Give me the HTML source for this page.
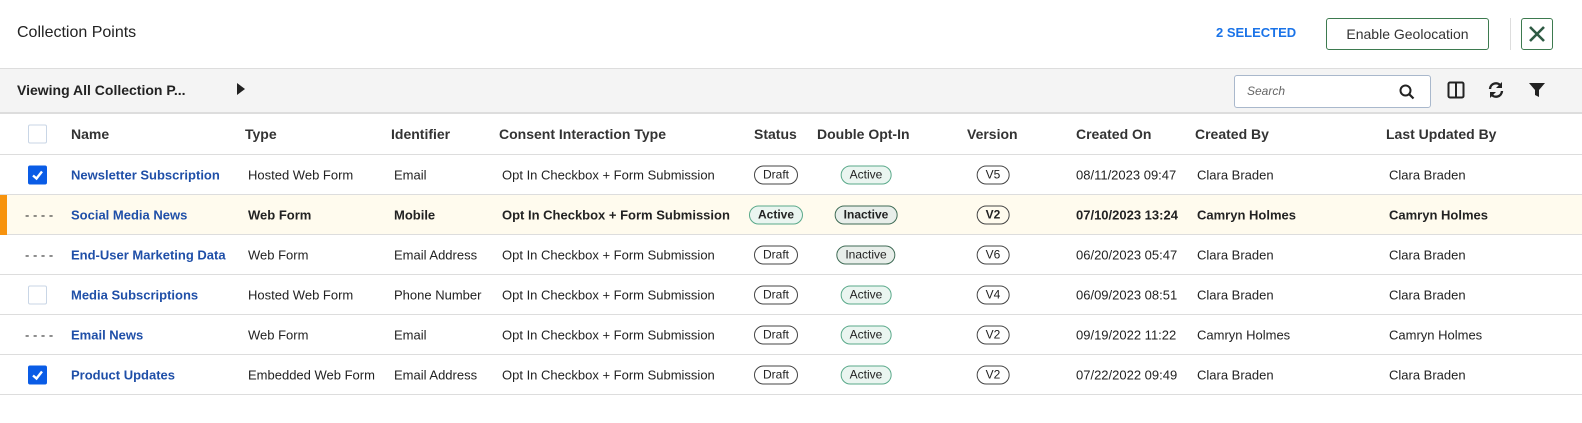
<!DOCTYPE html>
<html><head><style>
*{margin:0;padding:0;box-sizing:border-box}
body{width:1582px;height:423px;background:#fff;font-family:"Liberation Sans",sans-serif;color:#222;position:relative;overflow:hidden;font-size:13px}
.a{position:absolute;white-space:nowrap}
.row{position:absolute;left:0;width:1582px;height:40px;border-bottom:1px solid #ddd}
.row .a{top:50%;transform:translateY(-50%)}
.nm{color:#1f4fa8;font-weight:bold}
.pill{border:1px solid #444;border-radius:10px;height:19px;line-height:17px;padding:0 8px;font-size:12px;transform:translate(-50%,-50%)!important}
.act{background:#eaf5f0;border-color:#5aa98a}
.ina{background:#e8eeea;border-color:#3f6b55}
.cb{width:19px;height:19px;border:1px solid #c9d6e6;border-radius:2px;background:#fff}
.cbx{background:#0a5ce6;border-color:#0a5ce6}
.b{font-weight:bold}
.hd{font-weight:bold;color:#333;font-size:14px}
</style></head><body>
<div class="a" style="left:17px;top:24px;font-size:16px;color:#222">Collection Points</div>
<div class="a" style="left:1216px;top:25px;font-size:13px;font-weight:bold;color:#1a73e8">2 SELECTED</div>
<div class="a" style="left:1326px;top:18px;width:163px;height:32px;border:1px solid #3d7a4f;border-radius:3px;text-align:center;line-height:30px;font-size:14px;color:#333">Enable Geolocation</div>
<div class="a" style="left:1510px;top:18px;width:1px;height:32px;background:#ddd"></div>
<div class="a" style="left:1521px;top:18px;width:32px;height:32px;border:1px solid #3d7a4f;border-radius:3px"><svg width="30" height="30" viewBox="0 0 30 30"><path d="M8 8L22 22M22 8L8 22" stroke="#2f5b44" stroke-width="2.6"/></svg></div>
<div class="a" style="left:0;top:68px;width:1582px;height:46px;background:#f4f4f4;border-top:1px solid #ddd;border-bottom:2px solid #ddd"></div>
<div class="a" style="left:17px;top:82px;font-weight:bold;font-size:14px;color:#222">Viewing All Collection P...</div>
<svg class="a" style="left:236px;top:82px" width="10" height="14"><path d="M1 1L9 7L1 13Z" fill="#222"/></svg>
<div class="a" style="left:1234px;top:75px;width:197px;height:33px;border:1px solid #a9b8cc;border-radius:3px;background:#fff"><span style="position:absolute;left:12px;top:8px;font-style:italic;font-size:12px;color:#666">Search</span><svg style="position:absolute;left:164px;top:8px" width="16" height="16"><circle cx="6.5" cy="6.5" r="5" fill="none" stroke="#222" stroke-width="2"/><path d="M10 10L14.5 14.5" stroke="#222" stroke-width="2.2"/></svg></div>
<svg class="a" style="left:1447px;top:81px" width="18" height="18"><rect x="1.5" y="1.5" width="15" height="15" rx="1.5" fill="none" stroke="#222" stroke-width="2"/><path d="M9 2V16" stroke="#222" stroke-width="2"/></svg>
<svg class="a" style="left:1487px;top:81px" width="18" height="18" viewBox="0 0 18 18"><path d="M3 8A6 6 0 0 1 14 5" fill="none" stroke="#222" stroke-width="2.4"/><path d="M15 1V7H9Z" fill="#222"/><path d="M15 10A6 6 0 0 1 4 13" fill="none" stroke="#222" stroke-width="2.4"/><path d="M3 17V11H9Z" fill="#222"/></svg>
<svg class="a" style="left:1529px;top:82px" width="16" height="16"><path d="M0 1H16L10 8V15L6 13V8Z" fill="#222"/></svg>

<div class="row" style="top:114px;height:41px">
<div class="a cb" style="left:28px"></div>
<div class="a hd" style="left:71px">Name</div><div class="a hd" style="left:245px">Type</div><div class="a hd" style="left:391px">Identifier</div><div class="a hd" style="left:499px">Consent Interaction Type</div><div class="a hd" style="left:754px">Status</div><div class="a hd" style="left:817px">Double Opt-In</div><div class="a hd" style="left:967px">Version</div><div class="a hd" style="left:1076px">Created On</div><div class="a hd" style="left:1195px">Created By</div><div class="a hd" style="left:1386px">Last Updated By</div>
</div>

<div class="row" style="top:155px">
<div class="a cb cbx" style="left:28px"><svg width="17" height="17"><path d="M4 9L7.5 12L13 5" fill="none" stroke="#fff" stroke-width="2.4"/></svg></div>
<div class="a nm" style="left:71px">Newsletter Subscription</div><div class="a" style="left:248px">Hosted Web Form</div><div class="a" style="left:394px">Email</div><div class="a" style="left:502px">Opt In Checkbox + Form Submission</div>
<div class="a pill" style="left:776px">Draft</div><div class="a pill act" style="left:866px">Active</div><div class="a pill" style="left:993px">V5</div>
<div class="a" style="left:1076px">08/11/2023 09:47</div><div class="a" style="left:1197px">Clara Braden</div><div class="a" style="left:1389px">Clara Braden</div></div>

<div class="row" style="top:195px;background:#fffbee"><div class="a" style="left:0;width:7px;height:40px;background:#f7930e"></div>
<div class="a" style="left:25px">- - - -</div>
<div class="a nm" style="left:71px">Social Media News</div><div class="a b" style="left:248px">Web Form</div><div class="a b" style="left:394px">Mobile</div><div class="a b" style="left:502px">Opt In Checkbox + Form Submission</div>
<div class="a pill act b" style="left:776px">Active</div><div class="a pill ina b" style="left:866px">Inactive</div><div class="a pill b" style="left:993px">V2</div>
<div class="a b" style="left:1076px">07/10/2023 13:24</div><div class="a b" style="left:1197px">Camryn Holmes</div><div class="a b" style="left:1389px">Camryn Holmes</div></div>

<div class="row" style="top:235px">
<div class="a" style="left:25px">- - - -</div>
<div class="a nm" style="left:71px">End-User Marketing Data</div><div class="a" style="left:248px">Web Form</div><div class="a" style="left:394px">Email Address</div><div class="a" style="left:502px">Opt In Checkbox + Form Submission</div>
<div class="a pill" style="left:776px">Draft</div><div class="a pill ina" style="left:866px">Inactive</div><div class="a pill" style="left:993px">V6</div>
<div class="a" style="left:1076px">06/20/2023 05:47</div><div class="a" style="left:1197px">Clara Braden</div><div class="a" style="left:1389px">Clara Braden</div></div>

<div class="row" style="top:275px">
<div class="a cb" style="left:28px"></div>
<div class="a nm" style="left:71px">Media Subscriptions</div><div class="a" style="left:248px">Hosted Web Form</div><div class="a" style="left:394px">Phone Number</div><div class="a" style="left:502px">Opt In Checkbox + Form Submission</div>
<div class="a pill" style="left:776px">Draft</div><div class="a pill act" style="left:866px">Active</div><div class="a pill" style="left:993px">V4</div>
<div class="a" style="left:1076px">06/09/2023 08:51</div><div class="a" style="left:1197px">Clara Braden</div><div class="a" style="left:1389px">Clara Braden</div></div>

<div class="row" style="top:315px">
<div class="a" style="left:25px">- - - -</div>
<div class="a nm" style="left:71px">Email News</div><div class="a" style="left:248px">Web Form</div><div class="a" style="left:394px">Email</div><div class="a" style="left:502px">Opt In Checkbox + Form Submission</div>
<div class="a pill" style="left:776px">Draft</div><div class="a pill act" style="left:866px">Active</div><div class="a pill" style="left:993px">V2</div>
<div class="a" style="left:1076px">09/19/2022 11:22</div><div class="a" style="left:1197px">Camryn Holmes</div><div class="a" style="left:1389px">Camryn Holmes</div></div>

<div class="row" style="top:355px">
<div class="a cb cbx" style="left:28px"><svg width="17" height="17"><path d="M4 9L7.5 12L13 5" fill="none" stroke="#fff" stroke-width="2.4"/></svg></div>
<div class="a nm" style="left:71px">Product Updates</div><div class="a" style="left:248px">Embedded Web Form</div><div class="a" style="left:394px">Email Address</div><div class="a" style="left:502px">Opt In Checkbox + Form Submission</div>
<div class="a pill" style="left:776px">Draft</div><div class="a pill act" style="left:866px">Active</div><div class="a pill" style="left:993px">V2</div>
<div class="a" style="left:1076px">07/22/2022 09:49</div><div class="a" style="left:1197px">Clara Braden</div><div class="a" style="left:1389px">Clara Braden</div></div>
</body></html>
